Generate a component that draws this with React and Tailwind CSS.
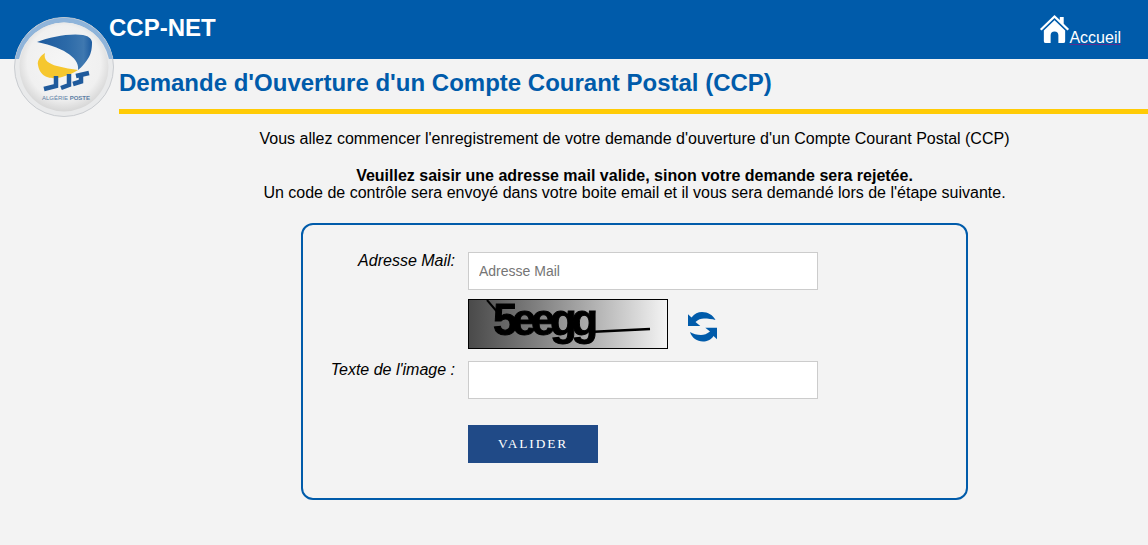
import React from 'react';

function Logo() {
    return (
        <svg viewBox="0 0 100 100" className="w-full h-full">
            <defs>
                <radialGradient id="disc" cx="50%" cy="45%" r="55%">
                    <stop offset="0%" stopColor="#f6f6f6" />
                    <stop offset="75%" stopColor="#f0f0f0" />
                    <stop offset="100%" stopColor="#d6d6d6" />
                </radialGradient>
                <linearGradient id="swoosh" x1="0" x2="1" y1="0" y2="0">
                    <stop offset="0%" stopColor="#1d5a9e" />
                    <stop offset="55%" stopColor="#2c6aa8" />
                    <stop offset="85%" stopColor="#3f78b0" />
                    <stop offset="100%" stopColor="#1c5ba0" />
                </linearGradient>
            </defs>
            <circle cx="50" cy="50" r="49.5" fill="#e9eaeb" stroke="#c9ccd0" strokeWidth="1" />
            <path d="M1.2 42 A49.5 49.5 0 0 1 98.8 42 L95 42 A46 46 0 0 0 5 42 Z" fill="#8fb4da" />
            <circle cx="50" cy="50" r="44.5" fill="url(#disc)" />
            <path d="M23 25 C36 20 56 16 69 18 C74 19 77 21 78 25 C78 32 77 36 75 40 C72 45 68 50 64 53 C66 43 53 31 23 25 Z" fill="url(#swoosh)" />
            <path d="M31 36 C26 39 23 44 24 48 C25 54 28 58 33 60 C38 62 44 61 48 60 C54 58 60 56 64 53 C58 52 50 51 43 49 C35 47 29 43 31 36 Z" fill="#f6c72e" />
            <g fill="none" stroke="#1f5a9c" strokeWidth="4.5">
                <path d="M30 72 L42 69 L42 59" />
                <path d="M47 71 L55 68 L55 57" />
                <path d="M59 67 L67 64.5 L67 57" />
                <path d="M62 59 L75 56" />
            </g>
            <text x="52" y="83" textAnchor="middle" fontSize="6" fill="#5d7fa6" fontFamily="'Liberation Sans', sans-serif">
                ALGÉRIE <tspan fontWeight="700">POSTE</tspan>
            </text>
        </svg>
    );
}

function HomeIcon() {
    return (
        <svg viewBox="0 0 32 32" className="w-[31px] h-[31px] fill-white">
            <path d="M16 1 L1 15.5 L2.6 17 L16 4.2 L29.4 17 L31 15.5 L25.5 10 L25.5 3 L21.5 3 L21.5 6.2 Z" />
            <path d="M16 6.5 L5 17 L5 28 Q5 30 7 30 L12 30 L12 22 Q12 18 16 18 Q20 18 20 22 L20 30 L25 30 Q27 30 27 28 L27 17 Z" />
        </svg>
    );
}

function RefreshIcon() {
    return (
        <svg viewBox="0 0 30 30" className="ml-[20px] mt-[5px] w-[30px] h-[30px] fill-[#005baa]">
            <path d="M0 2.3 L0 14 L12.3 14 L7.5 10 C10 7.5 13 6.5 16 6.5 C20 6.5 24 7 27.5 8 C25 3 20 0 14 0 C10 0 6.5 1.5 3.5 5.5 Z" />
            <path d="M29 27.3 L29 15.7 L17.3 15.7 L22 19.5 C19 22 16 23 13 23 C9 23 5 22 2 20 C4 26 9 29.5 15 29.5 C19 29.5 23 28 25.5 24 Z" />
        </svg>
    );
}

function Captcha() {
    return (
        <div className="relative w-[200px] h-[50px] border border-black bg-gradient-to-r from-[#4a4a4a] to-[#f4f4f4]">
            <span className="absolute left-[24px] top-[-2px] text-[44px] leading-[44px] font-bold tracking-[-5.5px] text-black blur-[0.5px] [-webkit-text-stroke:1px_black] font-['Liberation_Sans',sans-serif]">
                5eegg
            </span>
            <svg viewBox="0 0 198 48" className="absolute inset-0 w-full h-full">
                <path d="M18 0 L30 14" stroke="#000" strokeWidth="2" fill="none" />
                <path d="M120 32 L181 29" stroke="#000" strokeWidth="2.5" fill="none" />
            </svg>
        </div>
    );
}

export default function App() {
    return (
        <div className="relative min-h-[545px] bg-[#f3f3f3] text-black font-['Liberation_Sans',Arial,sans-serif]">
            <header className="h-[59px] bg-[#005baa] flex justify-between text-white">
                <h1 className="ml-[109px] mt-[13px] text-[24px] leading-[30px] font-bold">CCP-NET</h1>
                <a href="#" className="mr-[27px] mt-[14px] flex items-start">
                    <HomeIcon />
                    <span className="mt-[14px] -ml-px text-[16px] leading-[20px] underline decoration-[#5a2d91]">Accueil</span>
                </a>
            </header>

            <div className="absolute left-[14px] top-[17px] w-[100px] h-[100px]">
                <Logo />
            </div>

            <main className="ml-[119px]">
                <h2 className="pt-[10px] h-[40px] text-[24px] leading-[28px] font-bold text-[#005baa] border-b-[5px] border-[#ffcb05] box-content">
                    Demande d'Ouverture d'un Compte Courant Postal (CCP)
                </h2>

                <div className="mt-[16px] pl-[2px] text-center text-[16px] leading-[18px]">
                    <p>Vous allez commencer l'enregistrement de votre demande d'ouverture d'un Compte Courant Postal (CCP)</p>
                    <p className="mt-[19px] font-bold">Veuillez saisir une adresse mail valide, sinon votre demande sera rejetée.</p>
                    <p className="-mt-px">Un code de contrôle sera envoyé dans votre boite email et il vous sera demandé lors de l'étape suivante.</p>
                </div>

                <form className="mt-[21px] ml-[182px] w-[667px] h-[277px] border-2 border-[#005baa] rounded-xl pt-[27px] grid grid-cols-[152px_1fr] gap-x-[13px] content-start">
                    <label className="text-right italic text-[16px] leading-[18px]">Adresse Mail:</label>
                    <input
                        type="text"
                        placeholder="Adresse Mail"
                        className="w-[350px] h-[38px] px-[10px] bg-white border border-[#cccccc] text-[14px] placeholder:text-[#757575] outline-none"
                    />

                    <div className="col-start-2 mt-[9px] flex items-center">
                        <Captcha />
                        <RefreshIcon />
                    </div>

                    <label className="mt-[12px] text-right italic text-[16px] leading-[18px]">Texte de l'image :</label>
                    <input
                        type="text"
                        className="mt-[12px] w-[350px] h-[38px] px-[10px] bg-white border border-[#cccccc] text-[14px] outline-none"
                    />

                    <div className="col-start-2 mt-[26px]">
                        <button
                            type="button"
                            className="w-[130px] h-[38px] bg-[#204a87] text-white text-[13.33px] tracking-[1.9px] font-['Liberation_Serif',serif]"
                        >
                            VALIDER
                        </button>
                    </div>
                </form>
            </main>
        </div>
    );
}
